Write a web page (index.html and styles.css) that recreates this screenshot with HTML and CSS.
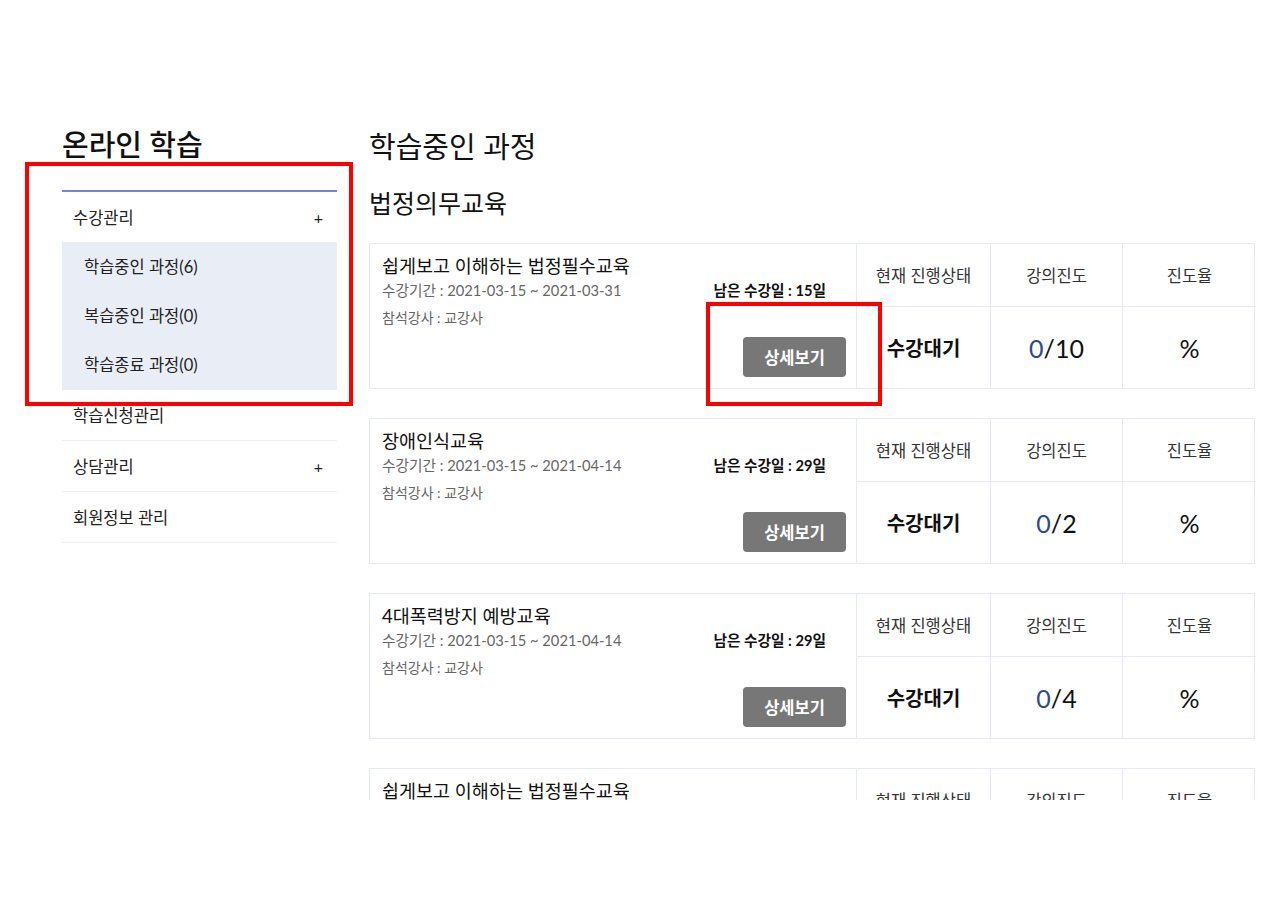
FILE: index.html
```html
<!DOCTYPE html>
<html lang="ko">
<head>
    <meta charset="UTF-8">
    <meta name="viewport" content="width=device-width, initial-scale=1.0">
    <title>온라인 학습</title>
    <link rel="stylesheet" href="styles.css">
</head>
<body>
    <div class="wrap">
        <aside class="side">
            <h2>온라인 학습</h2>
            <ul class="menu">
                <li class="menu-item open"><span>수강관리</span><span class="plus">+</span></li>
                <li class="sub">
                    <a href="#">학습중인 과정(6)</a>
                    <a href="#">복습중인 과정(0)</a>
                    <a href="#">학습종료 과정(0)</a>
                </li>
                <li class="menu-item"><span>학습신청관리</span></li>
                <li class="menu-item"><span>상담관리</span><span class="plus">+</span></li>
                <li class="menu-item"><span>회원정보 관리</span></li>
            </ul>
        </aside>

        <main class="main">
            <h1>학습중인 과정</h1>
            <h3>법정의무교육</h3>

            <div class="course">
                <div class="info">
                    <div class="c-title">쉽게보고 이해하는 법정필수교육</div>
                    <div class="c-row"><span>수강기간 : 2021-03-15 ~ 2021-03-31</span><b>남은 수강일 : 15일</b></div>
                    <div class="c-teacher">참석강사 : 교강사</div>
                    <div class="c-btn"><button>상세보기</button></div>
                </div>
                <div class="th">현재 진행상태</div>
                <div class="th">강의진도</div>
                <div class="th">진도율</div>
                <div class="td state">수강대기</div>
                <div class="td num"><em>0</em>/10</div>
                <div class="td num">%</div>
            </div>

            <div class="course">
                <div class="info">
                    <div class="c-title">장애인식교육</div>
                    <div class="c-row"><span>수강기간 : 2021-03-15 ~ 2021-04-14</span><b>남은 수강일 : 29일</b></div>
                    <div class="c-teacher">참석강사 : 교강사</div>
                    <div class="c-btn"><button>상세보기</button></div>
                </div>
                <div class="th">현재 진행상태</div>
                <div class="th">강의진도</div>
                <div class="th">진도율</div>
                <div class="td state">수강대기</div>
                <div class="td num"><em>0</em>/2</div>
                <div class="td num">%</div>
            </div>

            <div class="course">
                <div class="info">
                    <div class="c-title">4대폭력방지 예방교육</div>
                    <div class="c-row"><span>수강기간 : 2021-03-15 ~ 2021-04-14</span><b>남은 수강일 : 29일</b></div>
                    <div class="c-teacher">참석강사 : 교강사</div>
                    <div class="c-btn"><button>상세보기</button></div>
                </div>
                <div class="th">현재 진행상태</div>
                <div class="th">강의진도</div>
                <div class="th">진도율</div>
                <div class="td state">수강대기</div>
                <div class="td num"><em>0</em>/4</div>
                <div class="td num">%</div>
            </div>

            <div class="course">
                <div class="info">
                    <div class="c-title">쉽게보고 이해하는 법정필수교육</div>
                    <div class="c-row"><span>수강기간 : 2021-03-15 ~ 2021-03-31</span><b>남은 수강일 : 15일</b></div>
                    <div class="c-teacher">참석강사 : 교강사</div>
                    <div class="c-btn"><button>상세보기</button></div>
                </div>
                <div class="th">현재 진행상태</div>
                <div class="th">강의진도</div>
                <div class="th">진도율</div>
                <div class="td state">수강대기</div>
                <div class="td num"><em>0</em>/10</div>
                <div class="td num">%</div>
            </div>
        </main>

        <div class="mark mark-menu"></div>
        <div class="mark mark-btn"></div>
    </div>
</body>
</html>
```

FILE: styles.css
```css
body {
    margin: 0;
    background: #fff;
    font-family: 'Lato', 'Noto Sans CJK KR', sans-serif;
    color: #222;
}

.wrap {
    position: relative;
    display: flex;
    gap: 32px;
    padding: 125px 0 0 62px;
    height: 675px;
    overflow: hidden;
}

/* sidebar */
.side {
    width: 275px;
    flex-shrink: 0;
}

.side h2 {
    margin: 0 0 25px;
    font-size: 29px;
    font-weight: 500;
    line-height: 40px;
    color: #111;
}

.menu {
    list-style: none;
    margin: 0;
    padding: 0;
    border-top: 2px solid #7b80de;
}

.menu-item {
    display: flex;
    justify-content: space-between;
    align-items: center;
    height: 50px;
    padding: 0 14px 0 11px;
    font-size: 16.5px;
    color: #222;
    border-bottom: 1px solid #eef0f4;
}

.menu-item.open {
    border-bottom: none;
}

.plus {
    font-size: 16px;
}

.sub {
    background: #e9eef6;
    padding: 1px 0 0;
}

.sub a {
    display: block;
    height: 49px;
    line-height: 49px;
    padding-left: 22px;
    font-size: 16.5px;
    color: #222;
    text-decoration: none;
}

/* main */
.main {
    width: 886px;
}

.main h1 {
    margin: 0;
    font-size: 29px;
    font-weight: 400;
    line-height: 44px;
    color: #111;
}

.main h3 {
    margin: 12px 0 0;
    font-size: 25px;
    font-weight: 400;
    line-height: 44px;
    color: #111;
}

.course {
    display: grid;
    grid-template-columns: 487px 134px 132px 133px;
    grid-template-rows: 63px 81px;
    margin-top: 29px;
    border: 1px solid #e6ebf3;
}

.main h3 + .course {
    margin-top: 18px;
}

.info {
    grid-row: 1 / 3;
    padding: 11px 10px 0 12px;
    border-right: 1px solid #e6ebf3;
}

.c-title {
    font-size: 18.5px;
    line-height: 22px;
    color: #111;
}

.c-row {
    display: flex;
    justify-content: space-between;
    padding-right: 20px;
    font-size: 14.7px;
    line-height: 26px;
    color: #666;
}

.c-row b {
    color: #111;
    font-weight: 700;
}

.c-teacher {
    font-size: 14px;
    line-height: 30px;
    color: #666;
}

.c-btn {
    display: flex;
    justify-content: flex-end;
    margin-top: 4px;
}

.c-btn button {
    width: 103px;
    height: 40px;
    border: none;
    border-radius: 4px;
    background: #777;
    color: #fff;
    font-family: inherit;
    font-size: 16.5px;
    font-weight: 700;
}

.th, .td {
    display: flex;
    justify-content: center;
    align-items: center;
    border-right: 1px solid #e6ebf3;
}

.th:nth-child(4), .td:nth-child(7) {
    border-right: none;
}

.th {
    font-size: 16.5px;
    color: #333;
    border-bottom: 1px solid #e6ebf3;
}

.td.state {
    font-size: 20px;
    font-weight: 700;
    color: #111;
}

.td.num {
    font-size: 25px;
    color: #111;
}

.td.num em {
    font-style: normal;
    color: #2d4a85;
}

/* red annotation boxes */
.mark {
    position: absolute;
    border: 4px solid #f00;
    box-sizing: border-box;
}

.mark-menu {
    left: 25px;
    top: 162px;
    width: 328px;
    height: 244px;
}

.mark-btn {
    left: 706px;
    top: 302px;
    width: 176px;
    height: 104px;
}
```
